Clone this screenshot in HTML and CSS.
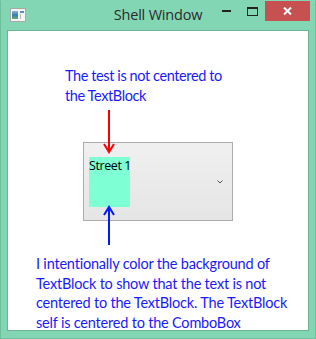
FILE: index.html
```html
<!DOCTYPE html>
<html lang="en">
<head>
    <meta charset="UTF-8">
    <title>Shell Window</title>
    <link rel="stylesheet" href="styles.css">
</head>
<body>
    <div class="window">
        <div class="titlebar">
            <svg class="app-icon" width="16" height="14" viewBox="0 0 16 14">
                <defs>
                    <linearGradient id="pane" x1="0" y1="0" x2="0" y2="1">
                        <stop offset="0" stop-color="#8fb6d8"/>
                        <stop offset="0.5" stop-color="#2f7fb5"/>
                        <stop offset="1" stop-color="#6fa86a"/>
                    </linearGradient>
                </defs>
                <rect x="0.5" y="0.5" width="15" height="13" fill="#f4f4f4" stroke="#a9a9a9"/>
                <rect x="2" y="3" width="6" height="8" fill="url(#pane)"/>
                <rect x="10" y="3" width="4" height="2" fill="#5a8fc4"/>
                <rect x="10" y="6" width="1" height="5" fill="#b8b8b8"/>
            </svg>
            <div class="title">Shell Window</div>
            <div class="controls">
                <div class="btn">
                    <svg width="9" height="2" viewBox="0 0 9 2"><rect width="9" height="2" fill="#222"/></svg>
                </div>
                <div class="btn">
                    <svg width="11" height="9" viewBox="0 0 11 9"><rect x="0.5" y="0.5" width="10" height="8" fill="none" stroke="#222"/><rect x="0" y="0" width="11" height="2" fill="#222"/></svg>
                </div>
                <div class="btn close">
                    <svg width="9" height="8" viewBox="0 0 9 8"><path d="M1 0.5 L8 7.5 M8 0.5 L1 7.5" stroke="#fff" stroke-width="2"/></svg>
                </div>
            </div>
        </div>
        <div class="client">
            <div class="note top-note">The test is not centered to<br>the TextBlock</div>
            <div class="combo-wrap">
                <svg class="arrow arrow-down" width="12" height="44" viewBox="0 0 12 44">
                    <path d="M6 0 V42" stroke="#f00" stroke-width="2"/>
                    <path d="M1 34 L6 42 L11 34" fill="none" stroke="#f00" stroke-width="2"/>
                </svg>
                <div class="combo">
                    <div class="combo-text">Street 1</div>
                    <svg class="chevron" width="6" height="4" viewBox="0 0 6 4"><path d="M0.5 0.5 L3 3 L5.5 0.5" fill="none" stroke="#555" stroke-width="1"/></svg>
                </div>
                <svg class="arrow arrow-up" width="12" height="40" viewBox="0 0 12 40">
                    <path d="M6 2 V40" stroke="#0019ff" stroke-width="2"/>
                    <path d="M1 10 L6 2 L11 10" fill="none" stroke="#0019ff" stroke-width="2"/>
                </svg>
            </div>
            <div class="note bottom-note">I intentionally color the background of<br>TextBlock to show that the text is not<br>centered to the TextBlock. The TextBlock<br>self is centered to the ComboBox</div>
        </div>
    </div>
</body>
</html>
```

FILE: styles.css
```css
body {
    margin: 0;
    padding: 0;
    font-family: "Open Sans", sans-serif;
}
.window {
    width: 316px;
    height: 339px;
    box-sizing: border-box;
    background-color: #83d6b4;
    border: 1px solid #6fbf9c;
    border-top-color: #83d6b4;
}
.titlebar {
    height: 29px;
    display: flex;
    align-items: flex-start;
    position: relative;
}
.app-icon {
    margin: 7px 0 0 9px;
}
.title {
    position: absolute;
    left: 0;
    right: 0;
    top: 4px;
    text-align: center;
    font-size: 14.5px;
    color: #2b2b2b;
    letter-spacing: -0.2px;
}
.controls {
    margin-left: auto;
    margin-right: 5px;
    display: flex;
}
.btn {
    width: 26px;
    height: 20px;
    display: flex;
    align-items: center;
    justify-content: center;
}
.close {
    width: 45px;
    background-color: #c75050;
}
.client {
    margin: 0 6px;
    height: 301px;
    box-sizing: border-box;
    background-color: #fff;
    border: 1px solid #6db395;
}
.note {
    font-family: Lato, sans-serif;
    font-size: 14.5px;
    line-height: 20px;
    color: #1a1aff;
}
.top-note {
    margin: 35px 0 0 57px;
    letter-spacing: -0.4px;
}
.combo-wrap {
    position: relative;
    margin: 0 0 0 75px;
    padding-top: 36px;
    width: 150px;
}
.combo {
    width: 150px;
    height: 79px;
    box-sizing: border-box;
    border: 1px solid #acacac;
    background: linear-gradient(#f0f0f0, #e5e5e5);
    display: flex;
    align-items: center;
}
.combo-text {
    margin-left: 5px;
    width: 41px;
    height: 50px;
    background-color: #7fffd4;
    font-family: "Open Sans", sans-serif;
    font-size: 12.5px;
    line-height: 18px;
    color: #000;
    letter-spacing: -0.4px;
    white-space: nowrap;
}
.chevron {
    margin-left: auto;
    margin-right: 9px;
}
.arrow {
    position: absolute;
    left: 20px;
}
.arrow-down {
    top: 4px;
}
.arrow-up {
    top: 99px;
}
.bottom-note {
    margin: 33px 0 0 28px;
    line-height: 19.5px;
    letter-spacing: -0.2px;
}
```
